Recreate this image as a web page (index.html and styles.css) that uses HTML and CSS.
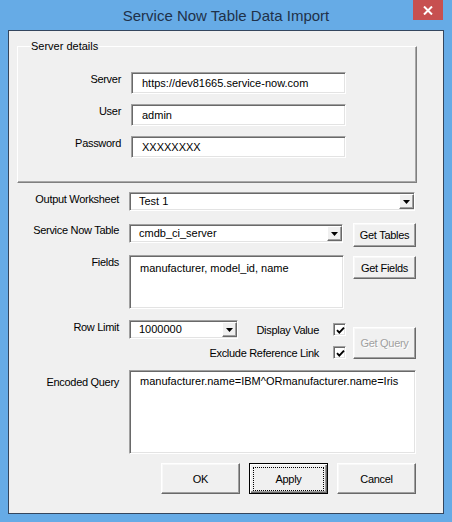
FILE: index.html
```html
<!DOCTYPE html>
<html>
<head>
<meta charset="utf-8">
<title>Service Now Table Data Import</title>
<link rel="stylesheet" href="styles.css">
</head>
<body>
<div class="window">
  <div class="titlebar">
    <span class="title">Service Now Table Data Import</span>
    <div class="close">
      <svg width="10" height="9" viewBox="0 0 10 9"><path d="M1 0.5 L9 8.5 M9 0.5 L1 8.5" stroke="#fff" stroke-width="2" fill="none"/></svg>
    </div>
  </div>
  <div class="client">
    <fieldset class="frame">
      <legend>Server details</legend>
      <div class="frame-grid">
        <div class="flabel">Server</div>
        <div class="textbox">https://dev81665.service-now.com</div>
        <div class="flabel">User</div>
        <div class="textbox">admin</div>
        <div class="flabel">Password</div>
        <div class="textbox">XXXXXXXX</div>
      </div>
    </fieldset>

    <div class="row r-output">
      <div class="label">Output Worksheet</div>
      <div class="combo w-output">
        <span class="combo-text">Test 1</span>
        <span class="drop"><svg width="7" height="4" viewBox="0 0 7 4"><polygon points="0,0 7,0 3.5,4" fill="#000"/></svg></span>
      </div>
    </div>

    <div class="row r-table">
      <div class="label">Service Now Table</div>
      <div class="combo w-table">
        <span class="combo-text">cmdb_ci_server</span>
        <span class="drop"><svg width="7" height="4" viewBox="0 0 7 4"><polygon points="0,0 7,0 3.5,4" fill="#000"/></svg></span>
      </div>
      <div class="btn btn-tables">Get Tables</div>
    </div>

    <div class="row r-fields">
      <div class="label">Fields</div>
      <div class="textarea w-fields">manufacturer, model_id, name</div>
      <div class="btn btn-fields">Get Fields</div>
    </div>

    <div class="row r-limit">
      <div class="label">Row Limit</div>
      <div class="limit-grid">
        <div class="combo w-limit">
          <span class="combo-text">1000000</span>
          <span class="drop"><svg width="7" height="4" viewBox="0 0 7 4"><polygon points="0,0 7,0 3.5,4" fill="#000"/></svg></span>
        </div>
        <div class="chk-label chk-label-1">Display Value</div>
        <span class="check check-1"><svg width="9" height="9" viewBox="0 0 9 9"><polyline points="1,4.2 3.3,6.6 8,1.6" stroke="#000" stroke-width="1.9" fill="none"/></svg></span>
        <div class="btn btn-query disabled">Get Query</div>
        <div class="chk-label chk-label-2">Exclude Reference Link</div>
        <span class="check check-2"><svg width="9" height="9" viewBox="0 0 9 9"><polyline points="1,4.2 3.3,6.6 8,1.6" stroke="#000" stroke-width="1.9" fill="none"/></svg></span>
      </div>
    </div>

    <div class="row r-query">
      <div class="label label-query">Encoded Query</div>
      <div class="textarea w-query">manufacturer.name=IBM^ORmanufacturer.name=Iris</div>
    </div>

    <div class="buttons">
      <div class="btn btn-dlg">OK</div>
      <div class="btn btn-dlg btn-default"><span class="focus">Apply</span></div>
      <div class="btn btn-dlg">Cancel</div>
    </div>
  </div>
</div>
</body>
</html>
```
FILE: styles.css
```css
* { box-sizing: border-box; }

body {
  margin: 0;
  font-family: "Liberation Sans", Arial, sans-serif;
  font-size: 11px;
  color: #000;
  background: #fff;
}

.window {
  position: relative;
  width: 452px;
  height: 522px;
  background: #66abe6;
  padding: 0 8px 8px 8px;
}

.titlebar {
  height: 30px;
  display: flex;
  justify-content: center;
  align-items: center;
  padding-top: 1px;
}

.title {
  font-size: 15px;
  color: #1f3149;
  line-height: 20px;
}

.close {
  position: absolute;
  top: 0;
  right: 9px;
  width: 30px;
  height: 20px;
  background: #c75050;
  display: flex;
  align-items: center;
  justify-content: center;
}

.client {
  width: 436px;
  height: 484px;
  border: 1px solid #34465e;
  background: #f0f0f0;
  display: flow-root;
}

/* Frame */
.frame {
  margin: 9px 0 0 8px;
  width: 400px;
  min-width: 0;
  padding: 19px 0 24px 0;
  border-style: solid;
  border-width: 1px 1px 1px 1px;
  border-color: #fff #7f7f7f #7f7f7f #fff;
  box-shadow: inset -1px -1px 0 #a8a8a8;
}

.frame legend {
  margin-left: 12px;
  padding: 0 1px;
  line-height: 13px;
  font-size: 11px;
}

.frame-grid {
  display: grid;
  grid-template-columns: 103px 215px;
  column-gap: 10px;
  row-gap: 10px;
}

.flabel, .label, .chk-label, .btn {
  letter-spacing: -0.3px;
}

.flabel {
  text-align: right;
  line-height: 14px;
}

.textbox, .textarea, .combo, .check {
  background: #fff;
  border: 1px solid;
  border-color: #a0a0a0 #fff #fff #a0a0a0;
  box-shadow: inset 1px 1px 0 #696969, inset -1px -1px 0 #e3e3e3;
}

.textbox {
  height: 22px;
  line-height: 20px;
  padding-left: 10px;
  white-space: nowrap;
}

/* rows */
.row {
  display: flex;
  align-items: flex-start;
}

.label {
  width: 110px;
  flex: none;
  margin-right: 10px;
  text-align: right;
  line-height: 14px;
}

.r-output { margin-top: 9px; }
.r-table { margin-top: 12px; }
.r-fields { margin-top: 8px; }
.r-limit { margin-top: 11px; }
.r-query { margin-top: 11px; }

.combo {
  height: 19px;
  display: flex;
  padding: 1px 0 1px 1px;
}

.combo-text {
  flex: 1;
  padding-left: 8px;
  line-height: 15px;
  white-space: nowrap;
}

.drop {
  width: 15px;
  flex: none;
  background: #f0f0f0;
  border: 1px solid;
  border-color: #fff #696969 #696969 #fff;
  box-shadow: inset -1px -1px 0 #a0a0a0;
  display: flex;
  align-items: center;
  justify-content: center;
  padding-top: 1px;
}

.w-output { width: 286px; }
.w-table { width: 214px; margin-top: 1px; }
.w-limit { width: 109px; }

.btn {
  background: #f0f0f0;
  border: 1px solid;
  border-color: #fff #696969 #696969 #fff;
  box-shadow: inset -1px -1px 0 #a0a0a0, inset 1px 1px 0 #f8f8f8;
  display: flex;
  align-items: center;
  justify-content: center;
  white-space: nowrap;
}

.btn-tables {
  width: 63px;
  height: 24px;
  margin-left: 10px;
}

.btn-fields {
  width: 63px;
  height: 23px;
  margin-left: 9px;
  margin-top: 1px;
}

.textarea {
  white-space: nowrap;
  line-height: 14px;
  padding-left: 10px;
}

.w-fields {
  width: 215px;
  height: 54px;
  padding-top: 5px;
}

.w-query {
  width: 287px;
  height: 84px;
  padding-top: 3px;
}

.label-query { margin-top: 5px; }

/* Row limit block */
.limit-grid {
  display: grid;
  grid-template-columns: 109px 95px 20px 63px;
  grid-template-rows: 22px 17px;
}

.w-limit { grid-column: 1; grid-row: 1; }

.chk-label {
  text-align: right;
  padding-right: 14px;
  line-height: 14px;
  white-space: nowrap;
}

.chk-label-1 { grid-column: 2; grid-row: 1; margin-top: 3px; }
.chk-label-2 { grid-column: 1 / 3; grid-row: 2; margin-top: 4px; }

.check {
  width: 13px;
  height: 13px;
  display: flex;
  align-items: center;
  justify-content: center;
  padding: 1px 0 0 1px;
}

.check-1 { grid-column: 3; grid-row: 1; margin-top: 3px; }
.check-2 { grid-column: 3; grid-row: 2; margin-top: 4px; }

.btn-query {
  grid-column: 4;
  grid-row: 1 / 3;
  align-self: end;
  height: 32px;
}

.disabled {
  color: #a0a0a0;
  text-shadow: 1px 1px 0 #fff;
}

/* dialog buttons */
.buttons {
  display: flex;
  gap: 9px;
  padding-left: 152px;
  margin-top: 9px;
}

.btn-dlg {
  width: 79px;
  height: 31px;
}

.btn-default {
  border-color: #000;
  box-shadow: inset 1px 1px 0 #fff, inset -1px -1px 0 #696969, inset -2px -2px 0 #a0a0a0;
  padding: 3px 3px 2px 3px;
  align-items: stretch;
}

.focus {
  flex: 1;
  border: 1px dotted #000;
  display: flex;
  align-items: center;
  justify-content: center;
}
```
